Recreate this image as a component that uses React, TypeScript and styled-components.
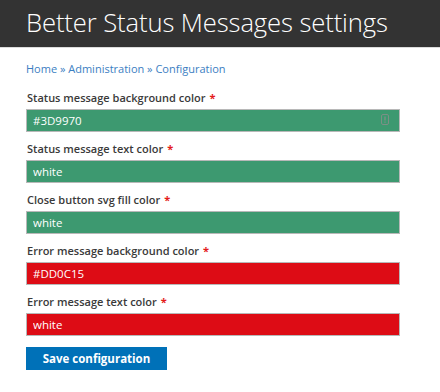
import React from "react";
import styled, { createGlobalStyle } from "styled-components";

const GlobalStyle = createGlobalStyle`
  body {
    margin: 0;
    background: #fff;
    font-family: "Open Sans", "Liberation Sans", sans-serif;
  }
`;

const Header = styled.div`
  background: #333333;
  height: 47px;
  border-bottom: 1px solid #dcdcdc;
  padding-left: 26px;
  display: flex;
  align-items: center;
`;

const Title = styled.h1`
  margin: 0;
  color: #fff;
  font-weight: 300;
  font-size: 25.6px;
  letter-spacing: -0.1px;
  line-height: 1;
  padding-bottom: 2px;
`;

const Content = styled.div`
  padding: 13px 40px 0 26px;
`;

const Breadcrumb = styled.div`
  font-size: 11px;
  color: #3b7ec2;
  line-height: 16px;
  margin-bottom: 12px;
`;

const Field = styled.div`
  display: flex;
  flex-direction: column;
  margin-bottom: 8px;
`;

const Label = styled.label`
  font-size: 11px;
  font-weight: 600;
  color: #3a3a3a;
  line-height: 17px;
  margin-bottom: 2px;
  padding-left: 1px;
`;

const Star = styled.span`
  color: #e41a1a;
  margin-left: 4px;
  font-weight: 700;
`;

const InputWrap = styled.div`
  position: relative;
`;

const Input = styled.input<{ $bg: string }>`
  box-sizing: border-box;
  width: 374px;
  height: 23px;
  border: 1px solid #b8b8b8;
  background: ${(p) => p.$bg};
  color: #fff;
  font-family: "Open Sans", "Liberation Sans", sans-serif;
  font-size: 11.5px;
  padding: 0 6px;
  outline: none;
`;

const FieldIcon = styled.svg`
  position: absolute;
  right: 11px;
  top: 6px;
`;

const SaveButton = styled.button`
  margin-top: 3px;
  width: 141px;
  height: 23px;
  border: none;
  background: #0071b8;
  color: #fff;
  font-family: "Open Sans", "Liberation Sans", sans-serif;
  font-weight: 700;
  font-size: 11.5px;
  padding: 0;
  cursor: pointer;
`;

const fields = [
  { label: "Status message background color", value: "#3D9970", bg: "#3d9970", icon: true },
  { label: "Status message text color", value: "white", bg: "#3d9970" },
  { label: "Close button svg fill color", value: "white", bg: "#3d9970" },
  { label: "Error message background color", value: "#DD0C15", bg: "#dd0c15" },
  { label: "Error message text color", value: "white", bg: "#dd0c15" },
];

export default function App() {
  return (
    <>
      <GlobalStyle />
      <Header>
        <Title>Better Status Messages settings</Title>
      </Header>
      <Content>
        <Breadcrumb>Home » Administration » Configuration</Breadcrumb>
        {fields.map((f) => (
          <Field key={f.label}>
            <Label>
              {f.label}
              <Star>*</Star>
            </Label>
            <InputWrap>
              <Input $bg={f.bg} defaultValue={f.value} readOnly />
              {f.icon && (
                <FieldIcon width="8" height="11" viewBox="0 0 8 11">
                  <rect x="0.5" y="0.5" width="7" height="10" rx="1.5" fill="none" stroke="#7d8f86" />
                  <rect x="3.3" y="2.5" width="1.4" height="4" fill="#7d8f86" />
                  <rect x="3.3" y="7.5" width="1.4" height="1.2" fill="#7d8f86" />
                </FieldIcon>
              )}
            </InputWrap>
          </Field>
        ))}
        <SaveButton>Save configuration</SaveButton>
      </Content>
    </>
  );
}
